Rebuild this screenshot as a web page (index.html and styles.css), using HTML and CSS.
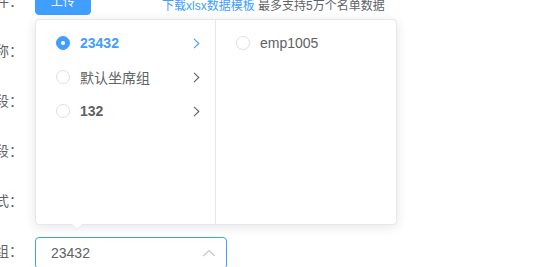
FILE: index.html
```html
<!DOCTYPE html>
<html>
<head>
   <meta charset="utf-8">
   <title>导入名单</title>
   <link rel="stylesheet" href="styles.css">
</head>
<body>
<div class="form">
   <div class="form-item">
      <label class="form-label">上传文件：</label>
      <div class="form-content">
         <button class="btn-upload" type="button">上传</button>
         <span class="tip"><a href="#">下载xlsx数据模板</a> 最多支持5万个名单数据</span>
      </div>
   </div>
   <div class="form-item">
      <label class="form-label">名单名称：</label>
      <div class="form-content"></div>
   </div>
   <div class="form-item">
      <label class="form-label">号码字段：</label>
      <div class="form-content"></div>
   </div>
   <div class="form-item">
      <label class="form-label">姓名字段：</label>
      <div class="form-content"></div>
   </div>
   <div class="form-item">
      <label class="form-label">分配方式：</label>
      <div class="form-content"></div>
   </div>
   <div class="form-item">
      <label class="form-label">坐席组：</label>
      <div class="form-content">
         <div class="cascader">
            <div class="cascader-input">
               <span>23432</span>
               <svg class="arrow-up" width="12" height="8" viewBox="0 0 12 8"><polyline points="0.5,7 6,1.5 11.5,7" fill="none" stroke="#C0C4CC" stroke-width="1.1"/></svg>
            </div>

            <div class="cascader-panel">
               <ul class="cascader-menu">
                  <li class="node is-active">
                     <span class="radio checked"></span>
                     <span class="node-label">23432</span>
                     <svg class="chev" width="7" height="11" viewBox="0 0 7 11"><polyline points="1,0.8 5.8,5.5 1,10.2" fill="none" stroke="currentColor" stroke-width="1.1"/></svg>
                  </li>
                  <li class="node">
                     <span class="radio"></span>
                     <span class="node-label">默认坐席组</span>
                     <svg class="chev" width="7" height="11" viewBox="0 0 7 11"><polyline points="1,0.8 5.8,5.5 1,10.2" fill="none" stroke="currentColor" stroke-width="1.1"/></svg>
                  </li>
                  <li class="node is-bold">
                     <span class="radio"></span>
                     <span class="node-label">132</span>
                     <svg class="chev" width="7" height="11" viewBox="0 0 7 11"><polyline points="1,0.8 5.8,5.5 1,10.2" fill="none" stroke="currentColor" stroke-width="1.1"/></svg>
                  </li>
               </ul>
               <ul class="cascader-menu">
                  <li class="node">
                     <span class="radio"></span>
                     <span class="node-label">emp1005</span>
                  </li>
               </ul>
               <div class="popper-arrow"></div>
            </div>
         </div>
      </div>
   </div>
</div>
</body>
</html>
```

FILE: styles.css
```css
html, body {
      margin: 0;
      height: 100%;
      overflow: hidden;
      background: #fff;
    }
    body {
      font-family: "Liberation Sans", "Noto Sans CJK SC", sans-serif;
      font-size: 14px;
      color: #606266;
    }
    a {
      color: #409EFF;
      text-decoration: none;
    }

.form {
      margin-top: -14px;
      margin-left: -65px;
}

.form-item {
      display: flex;
      align-items: center;
      height: 32px;
      margin-bottom: 18px;
}

.form-label {
      align-self: flex-start;
      width: 100px;
      box-sizing: border-box;
      padding-right: 12px;
      line-height: 30px;
      text-align: right;
      white-space: nowrap;
      flex-shrink: 0;
}

.form-content {
      display: flex;
      align-items: center;
      height: 32px;
      flex: 1;
}

.btn-upload {
      height: 28px;
      padding: 0 15px;
      margin-top: -3px;
      border: 1px solid #409EFF;
      border-radius: 4px;
      background: #409EFF;
      color: #fff;
      font-family: inherit;
      font-size: 12px;
}

.tip {
      align-self: flex-start;
      margin-top: 13px;
      margin-left: 71px;
      font-size: 12px;
      line-height: 14px;
      white-space: nowrap;
}

/* cascader */
.cascader {
      position: relative;
      align-self: flex-start;
      margin-top: 1px;
}

.cascader-input {
      display: flex;
      align-items: center;
      justify-content: space-between;
      width: 192px;
      height: 32px;
      box-sizing: border-box;
      padding: 0 11px 0 15px;
      border: 1px solid #409EFF;
      border-radius: 4px;
      color: #606266;
}

.arrow-up {
      display: block;
}

.cascader-panel {
      position: absolute;
      left: 0;
      bottom: calc(100% + 12px);
      display: flex;
      background: #fff;
      border: 1px solid #E4E7ED;
      border-radius: 4px;
      box-shadow: 0 2px 12px 0 rgba(0,0,0,.1);
}

.cascader-menu {
      list-style: none;
      margin: 0;
      padding: 6px 0;
      width: 180px;
      height: 204px;
      box-sizing: border-box;
      border-right: 1px solid #E4E7ED;
}

.cascader-menu:last-of-type {
      border-right: none;
}

.node {
      display: flex;
      align-items: center;
      height: 34px;
      padding: 0 20px;
      color: #606266;
}

.node.is-active {
      color: #409EFF;
      font-weight: bold;
}

.node.is-bold {
      font-weight: bold;
}

.node-label {
      flex: 1;
      padding: 0 10px;
      white-space: nowrap;
}

.chev {
      display: block;
      margin-right: -5px;
}

.node .chev {
      color: #606266;
}

.node.is-active .chev {
      color: #409EFF;
}

.radio {
      width: 14px;
      height: 14px;
      box-sizing: border-box;
      border: 1px solid #DCDFE6;
      border-radius: 50%;
      background: #fff;
      flex-shrink: 0;
      position: relative;
}

.radio.checked {
      border-color: #409EFF;
      background: #409EFF;
}

.radio.checked:after {
      content: "";
      position: absolute;
      left: 50%;
      top: 50%;
      width: 4px;
      height: 4px;
      margin: -2px 0 0 -2px;
      border-radius: 50%;
      background: #fff;
}

.popper-arrow {
      position: absolute;
      left: 35px;
      bottom: -6px;
      width: 0;
      height: 0;
      border: 6px solid transparent;
      border-bottom-width: 0;
      border-top-color: #E4E7ED;
}

.popper-arrow:after {
      content: "";
      position: absolute;
      left: -6px;
      bottom: 1px;
      border: 6px solid transparent;
      border-bottom-width: 0;
      border-top-color: #fff;
}
```
